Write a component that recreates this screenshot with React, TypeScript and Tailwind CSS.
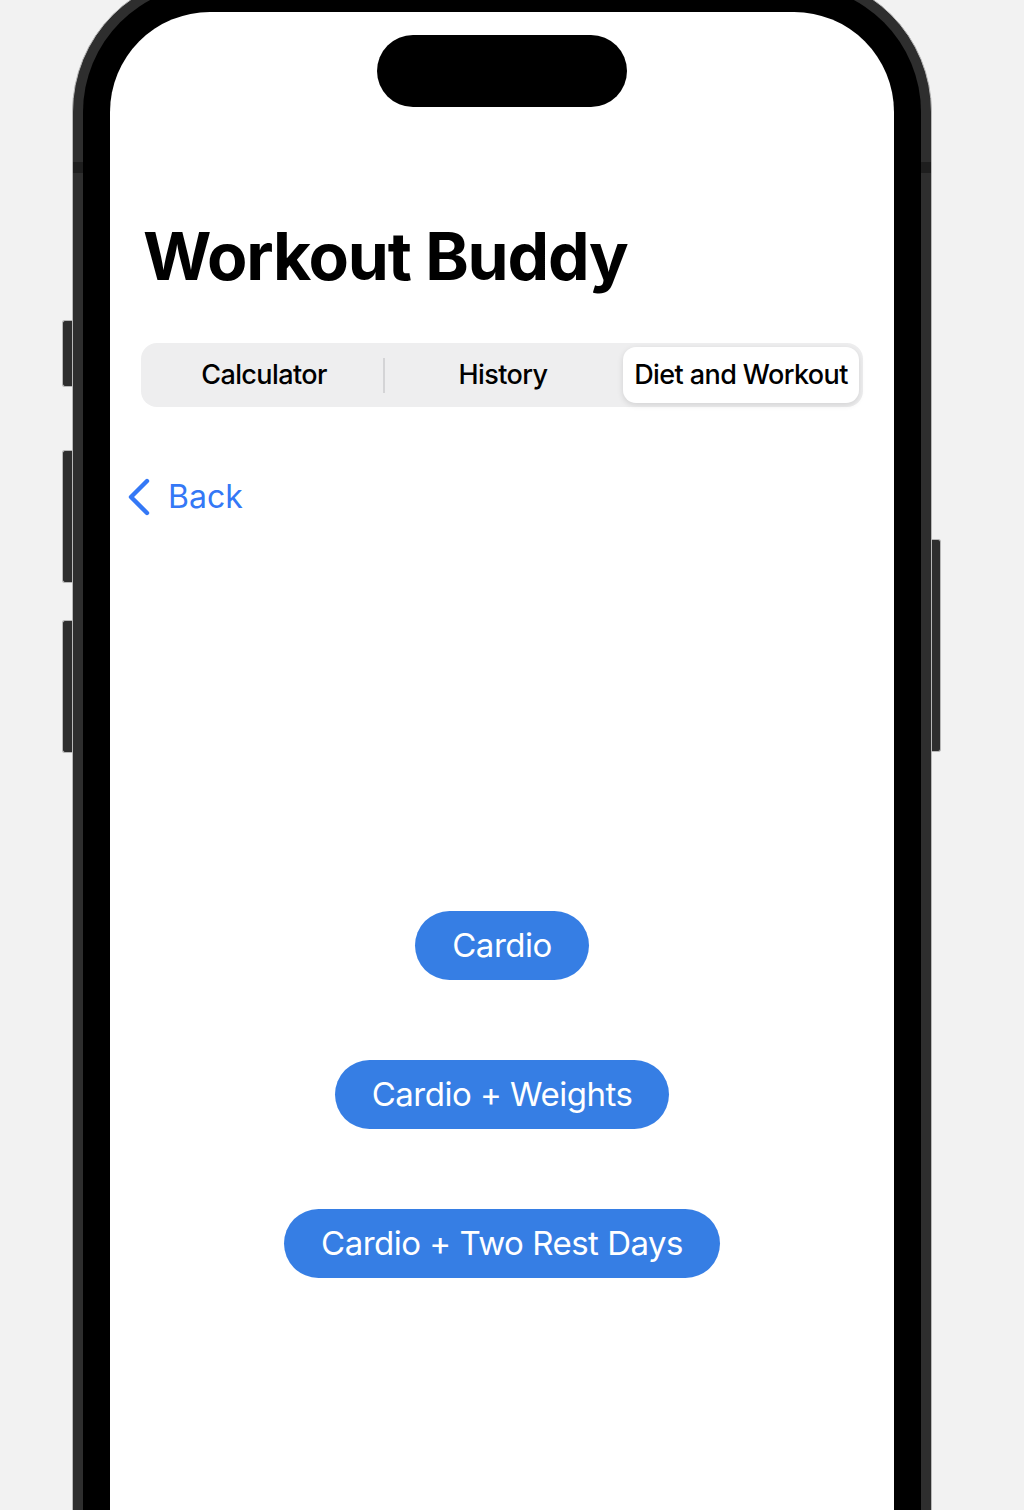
const font = { fontFamily: '"Inter", "Liberation Sans", sans-serif' };

const tabs = ["Calculator", "History", "Diet and Workout"];
const plans = ["Cardio", "Cardio + Weights", "Cardio + Two Rest Days"];

const SegmentedControl = ({ active }: { active: number }) => (
  <div className="mx-[31px] mt-[54px] flex h-[64px] items-center rounded-[16px] bg-[#eeeeef] p-[4px]">
    {tabs.map((tab, i) => (
      <div key={tab} className="flex h-full flex-1 items-center">
        {i > 0 && (
          <span
            className={
              i !== active && i - 1 !== active
                ? "h-[35px] w-[2px] bg-[#d4d4d6]"
                : "h-[35px] w-[2px] bg-transparent"
            }
          />
        )}
        <div
          className={
            i === active
              ? "flex h-full flex-1 items-center justify-center rounded-[13px] bg-white shadow-[0_2px_6px_rgba(0,0,0,0.12)]"
              : "flex h-full flex-1 items-center justify-center"
          }
        >
          <span className="text-[27px] font-medium tracking-[-0.6px] text-black">{tab}</span>
        </div>
      </div>
    ))}
  </div>
);

const BackChevron = () => (
  <svg width="26" height="40" viewBox="0 0 26 40" fill="none">
    <polyline
      points="21,4 5,20 21,36"
      stroke="currentColor"
      strokeWidth="4.4"
      strokeLinecap="round"
      strokeLinejoin="round"
    />
  </svg>
);

const sideKey = "w-[10px] border border-[#b8b8b8] bg-[#2e2e2e]";

export default function App() {
  return (
    <div className="h-[1510px] w-[1024px] overflow-hidden bg-[#f2f2f2]" style={font}>
      <div className="ml-[62px] mt-[-26px] flex items-start">
        {/* left rail: action button + volume keys */}
        <div className="flex w-[10px] flex-col pt-[346px]">
          <div className={`${sideKey} h-[67px] rounded-l-[3px] border-r-0`} />
          <div className={`${sideKey} mt-[63px] h-[133px] rounded-l-[3px] border-r-0`} />
          <div className={`${sideKey} mt-[37px] h-[133px] rounded-l-[3px] border-r-0`} />
        </div>

        <div className="relative w-[860px] shrink-0">
          {/* antenna bands */}
          <div className="absolute left-[1px] top-[188px] z-10 h-[11px] w-[10px] bg-[#1e1e1e]" />
          <div className="absolute right-[1px] top-[188px] z-10 h-[11px] w-[10px] bg-[#1e1e1e]" />

          <div className="rounded-[138px] border border-[#b8b8b8] bg-[#2e2e2e] p-[10px]">
            <div className="rounded-[127px] bg-black p-[27px]">
              <div className="h-[1600px] rounded-[100px] bg-white pt-[23px]">
                <div className="mx-auto h-[72px] w-[250px] rounded-full bg-black" />

                <h1 className="mt-[116px] pl-[33px] text-[66px] font-bold leading-[66px] tracking-[-1.2px] text-black">
                  Workout Buddy
                </h1>

                <SegmentedControl active={2} />

                <div className="mt-[70px] flex h-[40px] items-center pl-[16px] text-[#3478f6]">
                  <BackChevron />
                  <span className="ml-[16px] text-[32px] leading-[40px]">Back</span>
                </div>

                <div className="mt-[394px] flex flex-col items-center gap-[80px]">
                  {plans.map((plan) => (
                    <button
                      key={plan}
                      className="flex h-[69px] items-center rounded-full bg-[#367ee4] px-[37px] text-[33px] leading-none tracking-[-0.5px] text-white"
                    >
                      {plan}
                    </button>
                  ))}
                </div>
              </div>
            </div>
          </div>
        </div>

        {/* right rail: side button */}
        <div className="flex w-[9px] flex-col pt-[565px]">
          <div className="h-[213px] w-[9px] rounded-r-[3px] border border-l-0 border-[#b8b8b8] bg-[#2e2e2e]" />
        </div>
      </div>
    </div>
  );
}
